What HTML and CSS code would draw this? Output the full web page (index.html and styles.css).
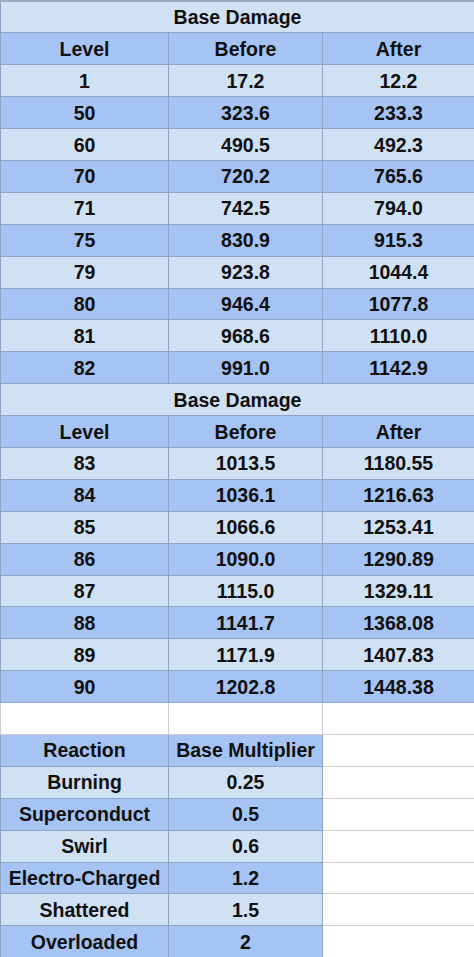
FILE: index.html
```html
<!DOCTYPE html>
<html>
<head>
<meta charset="utf-8">
<link rel="stylesheet" href="styles.css">
</head>
<body>
<table class="sheet">
  <colgroup><col class="c1"><col class="c2"><col class="c3"></colgroup>
  <tbody>
    <tr class="light title"><td colspan="3">Base Damage</td></tr>
    <tr class="dark"><td>Level</td><td>Before</td><td>After</td></tr>
    <tr class="light"><td>1</td><td>17.2</td><td>12.2</td></tr>
    <tr class="dark"><td>50</td><td>323.6</td><td>233.3</td></tr>
    <tr class="light"><td>60</td><td>490.5</td><td>492.3</td></tr>
    <tr class="dark"><td>70</td><td>720.2</td><td>765.6</td></tr>
    <tr class="light"><td>71</td><td>742.5</td><td>794.0</td></tr>
    <tr class="dark"><td>75</td><td>830.9</td><td>915.3</td></tr>
    <tr class="light"><td>79</td><td>923.8</td><td>1044.4</td></tr>
    <tr class="dark"><td>80</td><td>946.4</td><td>1077.8</td></tr>
    <tr class="light"><td>81</td><td>968.6</td><td>1110.0</td></tr>
    <tr class="dark"><td>82</td><td>991.0</td><td>1142.9</td></tr>
    <tr class="light title"><td colspan="3">Base Damage</td></tr>
    <tr class="dark"><td>Level</td><td>Before</td><td>After</td></tr>
    <tr class="light"><td>83</td><td>1013.5</td><td>1180.55</td></tr>
    <tr class="dark"><td>84</td><td>1036.1</td><td>1216.63</td></tr>
    <tr class="light"><td>85</td><td>1066.6</td><td>1253.41</td></tr>
    <tr class="dark"><td>86</td><td>1090.0</td><td>1290.89</td></tr>
    <tr class="light"><td>87</td><td>1115.0</td><td>1329.11</td></tr>
    <tr class="dark"><td>88</td><td>1141.7</td><td>1368.08</td></tr>
    <tr class="light"><td>89</td><td>1171.9</td><td>1407.83</td></tr>
    <tr class="dark"><td>90</td><td>1202.8</td><td>1448.38</td></tr>
    <tr class="blank"><td></td><td></td><td class="empty"></td></tr>
    <tr class="dark"><td>Reaction</td><td>Base Multiplier</td><td class="empty"></td></tr>
    <tr class="light"><td>Burning</td><td>0.25</td><td class="empty"></td></tr>
    <tr class="dark"><td>Superconduct</td><td>0.5</td><td class="empty"></td></tr>
    <tr class="light"><td>Swirl</td><td>0.6</td><td class="empty"></td></tr>
    <tr class="dark"><td>Electro-Charged</td><td>1.2</td><td class="empty"></td></tr>
    <tr class="light"><td>Shattered</td><td>1.5</td><td class="empty"></td></tr>
    <tr class="dark"><td>Overloaded</td><td>2</td><td class="empty"></td></tr>
  </tbody>
</table>
</body>
</html>
```

FILE: styles.css
```css
html, body {
  margin: 0;
  padding: 0;
  background: #ffffff;
}

.sheet {
  width: 474px;
  table-layout: fixed;
  border-collapse: collapse;
  font-family: "Liberation Sans", Arial, sans-serif;
  font-weight: bold;
  font-size: 19.5px;
  color: #101010;
  border-top: 2px solid #9fabbb;
}

.c1 { width: 168px; }
.c2 { width: 154px; }
.c3 { width: 152px; }

.sheet td {
  height: 31.9px;
  padding: 1px 0 0 0;
  text-align: center;
  vertical-align: middle;
  border: 1px solid #8ea4c4;
  white-space: nowrap;
  overflow: hidden;
  box-sizing: border-box;
}

.light td { background: #d0e1f4; }
.dark td { background: #a6c4f3; }

.blank td {
  background: #ffffff;
  border-color: #c9cdd3;
}

.sheet td.empty {
  background: #ffffff;
  border-top-color: #cfcfcf;
  border-bottom-color: #cfcfcf;
  border-right-color: #ffffff;
}
```
